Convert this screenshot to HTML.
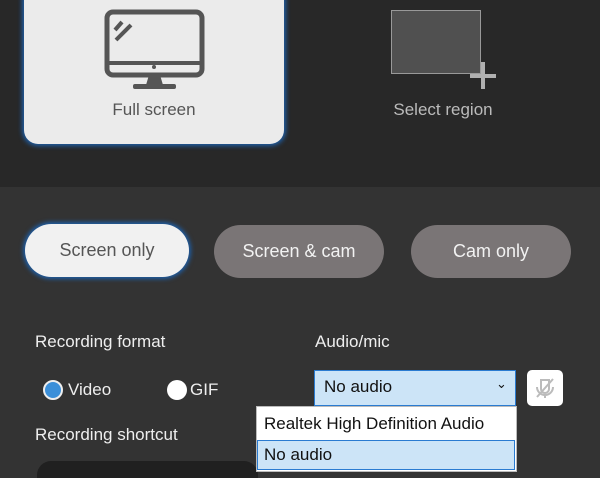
<!DOCTYPE html><html><head><style>
body{margin:0;width:600px;height:478px;overflow:hidden;background:#333;font-family:"Segoe UI","Liberation Sans",sans-serif;position:relative}
.top{position:absolute;left:0;top:0;width:600px;height:187px;background:#282828}
.a{position:absolute;white-space:nowrap}
.card{position:absolute;left:24px;top:-14px;width:260px;height:158px;background:#ebebeb;border-radius:14px;box-shadow:0 0 5px 2px #1e5fa8}
.pill{position:absolute;height:53px;border-radius:27px;background:#7a7576;color:#f2f2f2;font-size:18px;text-align:center;line-height:53px}
</style></head><body>
<div class="top"></div>
<div class="card"></div>
<svg class="a" style="left:100px;top:5px" width="110" height="90" viewBox="100 5 110 90">
<rect x="107" y="12" width="95" height="63" rx="6" fill="none" stroke="#555" stroke-width="5"/>
<line x1="107" y1="63" x2="202" y2="63" stroke="#555" stroke-width="4"/>
<line x1="115" y1="30" x2="122" y2="22" stroke="#555" stroke-width="4"/>
<line x1="116" y1="40" x2="131" y2="25" stroke="#555" stroke-width="4"/>
<circle cx="154" cy="67" r="2" fill="#555"/>
<path d="M149 75 L146 85 L163 85 L160 75 Z" fill="#555"/>
<rect x="133" y="84" width="43" height="5" rx="2" fill="#555"/>
</svg>
<div class="a" style="left:24px;width:260px;text-align:center;top:100px;font-size:17px;color:#555">Full screen</div>
<div class="a" style="left:391px;top:10px;width:88px;height:62px;background:#505050;border:1.5px solid #999"></div>
<div class="a" style="left:470px;top:74px;width:26px;height:4px;background:#b0b0b0"></div>
<div class="a" style="left:481px;top:62px;width:4px;height:27px;background:#b0b0b0"></div>
<div class="a" style="left:343px;width:200px;text-align:center;top:100px;font-size:17px;color:#bbb">Select region</div>
<div class="pill" style="left:25px;top:224px;width:164px;background:#f1f1f1;color:#555;box-shadow:0 0 4px 2px #1e5fa8">Screen only</div>
<div class="pill" style="left:214px;top:225px;width:170px">Screen &amp; cam</div>
<div class="pill" style="left:411px;top:225px;width:160px">Cam only</div>
<div class="a" style="left:35px;top:332px;font-size:17px;color:#eee">Recording format</div>
<div class="a" style="left:315px;top:332px;font-size:17px;color:#eee">Audio/mic</div>
<div class="a" style="left:43px;top:380px;width:16px;height:16px;border-radius:50%;background:#3b8fd9;border:2px solid #eee"></div>
<div class="a" style="left:68px;top:380px;font-size:17px;color:#eee">Video</div>
<div class="a" style="left:167px;top:380px;width:20px;height:20px;border-radius:50%;background:#fff"></div>
<div class="a" style="left:190px;top:380px;font-size:17px;color:#eee">GIF</div>
<div class="a" style="left:314px;top:370px;width:200px;height:34px;background:#cce4f7;border:1.5px solid #2a7bd1"></div>
<div class="a" style="left:324px;top:377px;font-size:17px;color:#111">No audio</div>
<div class="a" style="left:496px;top:376px;font-size:13px;color:#111">&#8964;</div>
<div class="a" style="left:527px;top:370px;width:36px;height:36px;background:#fff;border-radius:5px"></div>
<svg class="a" style="left:532px;top:375px" width="26" height="26" viewBox="0 0 26 26"><path d="M9 5h8v9a4 4 0 0 1-8 0z M5 12a8 8 0 0 0 16 0 M13 20v3 M5 22L21 4" fill="none" stroke="#bbb" stroke-width="2"/></svg>
<div class="a" style="left:35px;top:425px;font-size:17px;color:#eee">Recording shortcut</div>
<div class="a" style="left:37px;top:461px;width:221px;height:17px;background:#202020;border-radius:14px 14px 0 0"></div>
<div class="a" style="left:256px;top:406px;width:261px;height:66px;background:#fff;border:1px solid #bbb;box-sizing:border-box"></div>
<div class="a" style="left:264px;top:414px;font-size:17px;color:#111">Realtek High Definition Audio</div>
<div class="a" style="left:257px;top:440px;width:258px;height:30px;background:#cce4f7;border:1px solid #2a7bd1;box-sizing:border-box"></div>
<div class="a" style="left:264px;top:445px;font-size:17px;color:#111">No audio</div>
</body></html>
